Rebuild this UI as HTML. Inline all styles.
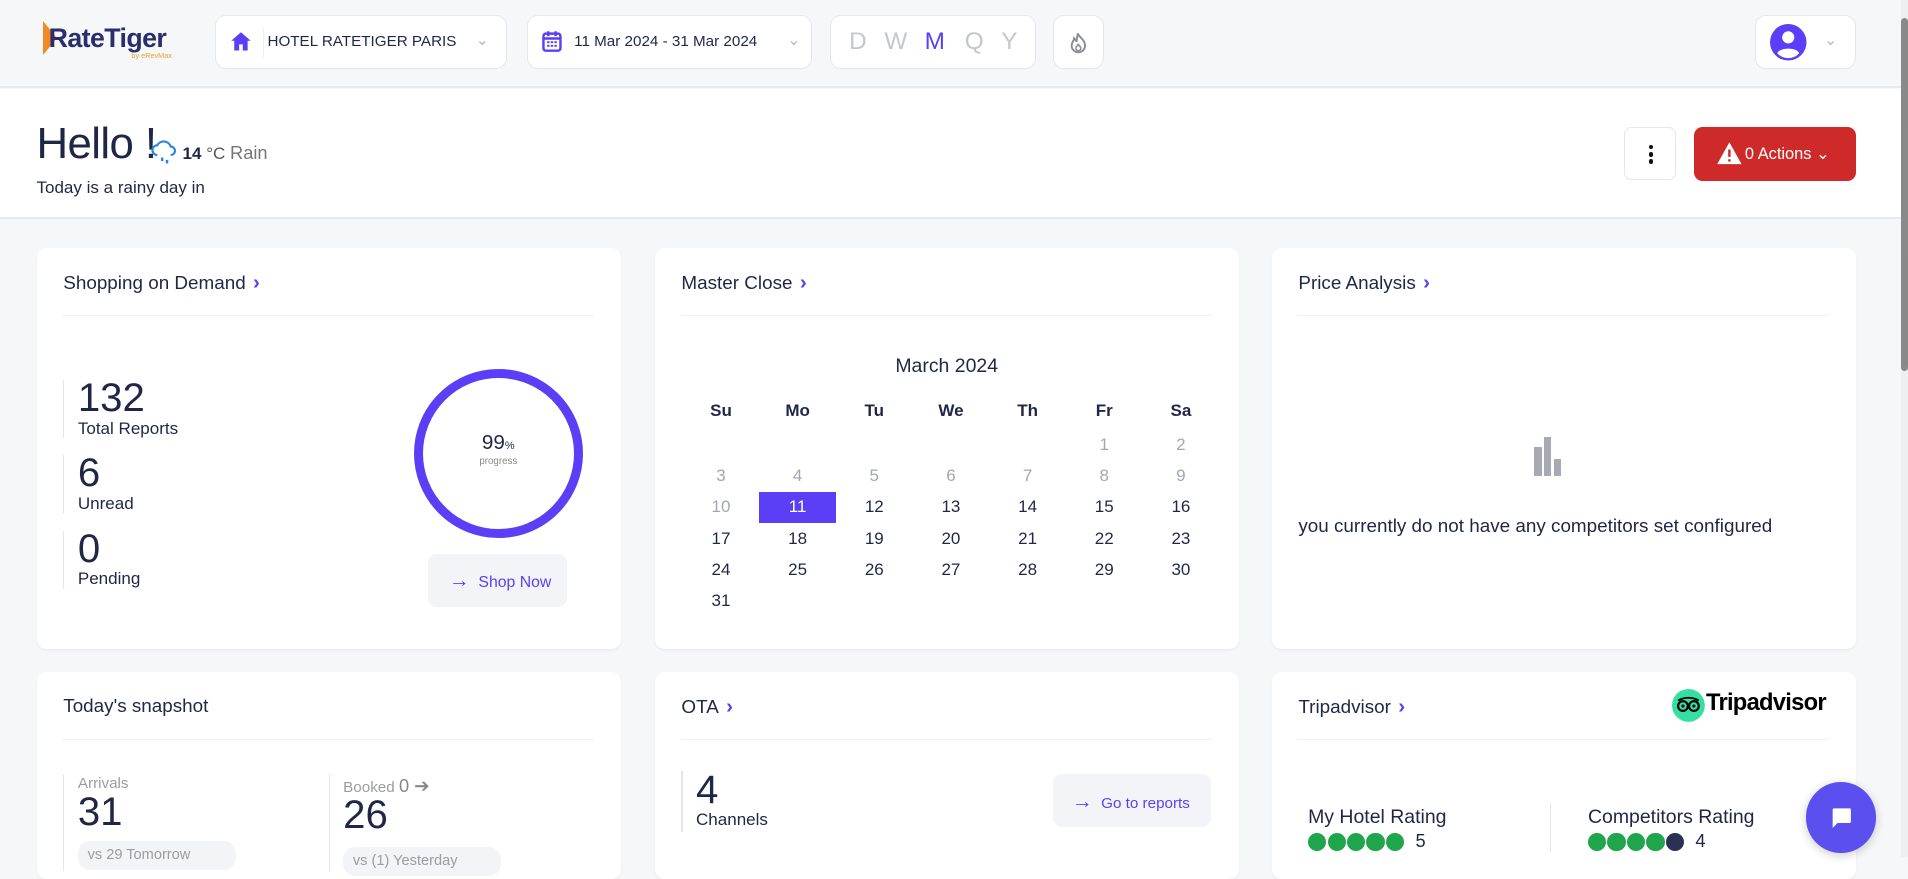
<!DOCTYPE html>
<html><head><meta charset="utf-8">
<style>
html{zoom:1.21684}
*{box-sizing:border-box;margin:0;padding:0}
body{width:1568px;height:704px;overflow:hidden;background:#f6f7f9;font-family:"Liberation Sans",sans-serif;color:#1f2747;position:relative}
.a{position:absolute}
.box{position:absolute;background:#fff;border:1px solid #e6e7ec;border-radius:9px}
.card{position:absolute;background:#fff;border-radius:8px;box-shadow:0 1px 2px rgba(0,0,0,.05)}
.ttl{position:absolute;left:22px;top:19px;font-size:15.5px;color:#1f2747}
.ttl b{color:#5b3ff6;font-weight:bold;margin-left:6px;font-size:17px}
.hr{position:absolute;left:22px;right:22px;top:55px;height:1px;background:#eef0f5}
.cal td{width:63px;height:25.6px;text-align:center;font-size:14px}
.g{color:#a3a7b3}
.dot{display:inline-block;width:15px;height:15px;border-radius:50%;background:#1fa64b;margin-right:1px;vertical-align:middle}
</style></head><body>
<!-- top bar -->
<div class="a" style="left:0;top:0;width:1568px;height:72px;border-bottom:2px solid #e8e9ee"></div>
<div class="a" style="left:35px;top:17px;width:0;height:0;border-left:12px solid #f08a24;border-top:14px solid transparent;border-bottom:14px solid transparent"></div>
<div class="a" style="left:40px;top:19px;font-size:22px;font-weight:bold;color:#2b2d6e;letter-spacing:-0.5px">RateTiger</div>
<div class="a" style="left:108px;top:42px;font-size:6px;color:#f0a030">by eRevMax</div>
<div class="box" style="left:177px;top:12px;width:240px;height:45px">
 <svg class="a" style="left:11px;top:13px" width="18" height="17" viewBox="0 0 18 17"><path d="M9 1L1 8h2.5v8h4v-5h3v5h4V8H17z" fill="#5b3ff6"/></svg>
 <div class="a" style="left:38px;top:10px;width:1px;height:24px;background:#eee"></div>
 <div class="a" style="left:42px;top:14px;font-size:12.5px">HOTEL RATETIGER PARIS</div>
 <div class="a" style="left:213px;top:12px;font-size:13px;color:#b8bac4">&#8964;</div>
</div>
<div class="box" style="left:433px;top:12px;width:234px;height:45px">
 <svg class="a" style="left:11px;top:12px" width="18" height="19" viewBox="0 0 18 19"><rect x="2" y="3" width="14" height="14" rx="2" fill="none" stroke="#5b3ff6" stroke-width="2"/><path d="M2 7h14M6 1v4M12 1v4" stroke="#5b3ff6" stroke-width="2"/><path d="M5 10h2M8 10h2M11 10h2M5 13h2M8 13h2M11 13h2" stroke="#5b3ff6" stroke-width="1.5"/></svg>
 <div class="a" style="left:38px;top:14px;font-size:12.5px">11 Mar 2024 - 31 Mar 2024</div>
 <div class="a" style="left:213px;top:12px;font-size:13px;color:#b8bac4">&#8964;</div>
</div>
<div class="box" style="left:682px;top:12px;width:169px;height:45px;font-size:20px;color:#c4c6cf">
 <span class="a" style="left:15px;top:10px">D</span><span class="a" style="left:44px;top:10px">W</span><span class="a" style="left:77px;top:10px;color:#5b3ff6">M</span><span class="a" style="left:110px;top:10px">Q</span><span class="a" style="left:140px;top:10px">Y</span>
</div>
<div class="box" style="left:865px;top:12px;width:42px;height:45px">
 <svg class="a" style="left:12px;top:13px" width="17" height="19" viewBox="0 0 17 19"><path d="M8 2c1 3 6 5 6 10a5.5 5.5 0 01-11 0c0-3 2-4 2-6 1 1 2 2 2 3 0-3 1-5 1-7z" fill="none" stroke="#8a8d99" stroke-width="1.6"/><path d="M8.5 11c1 1.5 2 2 2 3.2a2 2 0 01-4 0c0-1 1-2 2-3.2z" fill="none" stroke="#8a8d99" stroke-width="1.3"/></svg>
</div>
<div class="box" style="left:1442px;top:12px;width:83px;height:45px">
 <svg class="a" style="left:12px;top:7px" width="30" height="30" viewBox="0 0 30 30"><circle cx="15" cy="15" r="15" fill="#5b3ff6"/><circle cx="15" cy="11" r="5" fill="#fff"/><path d="M6 24c2-5 16-5 18 0a12 12 0 01-18 0z" fill="#fff"/></svg>
 <div class="a" style="left:56px;top:12px;font-size:13px;color:#b8bac4">&#8964;</div>
</div>
<div class="a" style="left:1562px;top:15px;width:6px;height:290px;background:#8e8e8e;border-radius:3px"></div>
<div class="a" style="left:1562px;top:0;width:6px;height:704px;background:rgba(0,0,0,0.03)"></div>

<!-- hello -->
<div class="a" style="left:0;top:73px;width:1562px;height:107px;background:#fff;border-bottom:2px solid #e8e9ee"></div>
<div class="a" style="left:30px;top:98px;font-size:36px;font-weight:300;color:#1f2747;letter-spacing:-0.5px">Hello !</div>
<svg class="a" style="left:123px;top:113px" width="24" height="26" viewBox="0 0 24 26"><path d="M6 14a4 4 0 010-8 6 6 0 0111 1 3.5 3.5 0 010 7" fill="none" stroke="#2f89d6" stroke-width="1.8"/><path d="M10 16v3M14 18v3" stroke="#2f89d6" stroke-width="2"/></svg>
<div class="a" style="left:150px;top:117px;font-size:14px"><b>14</b> <span style="color:#555">&#176;C</span> <span style="color:#767676;font-size:15px">Rain</span></div>
<div class="a" style="left:30px;top:146px;font-size:14px">Today is a rainy day in</div>
<div class="box" style="left:1335px;top:104px;width:42px;height:44px;border-radius:6px">
 <div class="a" style="left:19px;top:14px;width:4px;height:4px;border-radius:2px;background:#111"></div>
 <div class="a" style="left:19px;top:20px;width:4px;height:4px;border-radius:2px;background:#111"></div>
 <div class="a" style="left:19px;top:26px;width:4px;height:4px;border-radius:2px;background:#111"></div>
</div>
<div class="a" style="left:1392px;top:104px;width:133px;height:45px;background:#cf2a2a;border-radius:7px;color:#fff">
 <svg class="a" style="left:18px;top:12px" width="22" height="20" viewBox="0 0 22 20"><path d="M11 1L21 19H1z" fill="#fff"/><path d="M11 7v6M11 15v2" stroke="#cf2a2a" stroke-width="2"/></svg>
 <div class="a" style="left:42px;top:14px;font-size:13.5px">0 Actions &#8964;</div>
</div>

<!-- row 1 -->
<div class="card" style="left:30px;top:204px;width:480px;height:329px">
 <div class="ttl">Shopping on Demand<b>&#8250;</b></div><div class="hr"></div>
 <div class="a" style="left:22px;top:108px;width:1px;height:48px;background:#e3e5ea"></div>
 <div class="a" style="left:34px;top:104px;font-size:33px">132</div>
 <div class="a" style="left:34px;top:140px;font-size:14px">Total Reports</div>
 <div class="a" style="left:22px;top:170px;width:1px;height:48px;background:#e3e5ea"></div>
 <div class="a" style="left:34px;top:166px;font-size:33px">6</div>
 <div class="a" style="left:34px;top:202px;font-size:14px">Unread</div>
 <div class="a" style="left:22px;top:232px;width:1px;height:48px;background:#e3e5ea"></div>
 <div class="a" style="left:34px;top:228px;font-size:33px">0</div>
 <div class="a" style="left:34px;top:264px;font-size:14px">Pending</div>
 <div class="a" style="left:310px;top:99px;width:139px;height:139px;border-radius:50%;border:8px solid #5b3ff6"></div>
 <div class="a" style="left:310px;top:150px;width:139px;text-align:center;font-size:17px">99<span style="font-size:9px">%</span></div>
 <div class="a" style="left:310px;top:171px;width:139px;text-align:center;font-size:8px;color:#888">progress</div>
 <div class="a" style="left:322px;top:251px;width:114px;height:44px;background:#f3f4f7;border-radius:7px;color:#5b3ff6;font-size:13px;padding:13px 0 0 17px"><span style="font-size:17px">&#8594;</span>&nbsp; Shop Now</div>
</div>
<div class="card" style="left:538px;top:204px;width:480px;height:329px">
 <div class="ttl">Master Close<b>&#8250;</b></div><div class="hr"></div>
 <div class="a" style="left:0;top:88px;width:480px;text-align:center;font-size:16px">March 2024</div>
 <table class="cal a" style="left:23px;top:119px;border-collapse:collapse">
  <tr style="font-weight:bold"><td style="height:30px">Su</td><td>Mo</td><td>Tu</td><td>We</td><td>Th</td><td>Fr</td><td>Sa</td></tr>
  <tr class="g"><td></td><td></td><td></td><td></td><td></td><td>1</td><td>2</td></tr>
  <tr class="g"><td>3</td><td>4</td><td>5</td><td>6</td><td>7</td><td>8</td><td>9</td></tr>
  <tr><td class="g">10</td><td style="background:#5b3ff6;color:#fff">11</td><td>12</td><td>13</td><td>14</td><td>15</td><td>16</td></tr>
  <tr><td>17</td><td>18</td><td>19</td><td>20</td><td>21</td><td>22</td><td>23</td></tr>
  <tr><td>24</td><td>25</td><td>26</td><td>27</td><td>28</td><td>29</td><td>30</td></tr>
  <tr><td>31</td><td></td><td></td><td></td><td></td><td></td><td></td></tr>
 </table>
</div>
<div class="card" style="left:1045px;top:204px;width:480px;height:329px">
 <div class="ttl">Price Analysis<b>&#8250;</b></div><div class="hr"></div>
 <div class="a" style="left:216px;top:163px;width:6px;height:24px;background:#a7aab5"></div>
 <div class="a" style="left:224px;top:155px;width:6px;height:32px;background:#a7aab5"></div>
 <div class="a" style="left:232px;top:173px;width:6px;height:14px;background:#a7aab5"></div>
 <div class="a" style="left:22px;top:219px;font-size:15.5px">you currently do not have any competitors set configured</div>
</div>

<!-- row 2 -->
<div class="card" style="left:30px;top:552px;width:480px;height:170px">
 <div class="ttl">Today's snapshot</div><div class="hr"></div>
 <div class="a" style="left:22px;top:84px;width:1px;height:80px;background:#e3e5ea"></div>
 <div class="a" style="left:34px;top:85px;font-size:12.5px;color:#9a9ca6">Arrivals</div>
 <div class="a" style="left:34px;top:96px;font-size:33px">31</div>
 <div class="a" style="left:34px;top:139px;width:130px;height:24px;background:#f3f4f7;border-radius:10px;font-size:12px;color:#9a9ca6;padding:5px 8px">vs 29 Tomorrow</div>
 <div class="a" style="left:240px;top:84px;width:1px;height:80px;background:#e3e5ea"></div>
 <div class="a" style="left:252px;top:85px;font-size:12.5px;color:#9a9ca6">Booked <span style="font-size:15px;color:#888">0 &#10132;</span></div>
 <div class="a" style="left:252px;top:99px;font-size:33px">26</div>
 <div class="a" style="left:252px;top:144px;width:130px;height:24px;background:#f3f4f7;border-radius:10px;font-size:12px;color:#9a9ca6;padding:5px 8px">vs (1) Yesterday</div>
</div>
<div class="card" style="left:538px;top:552px;width:480px;height:170px">
 <div class="ttl">OTA<b>&#8250;</b></div><div class="hr"></div>
 <div class="a" style="left:22px;top:82px;width:1px;height:50px;background:#e3e5ea"></div>
 <div class="a" style="left:34px;top:78px;font-size:33px">4</div>
 <div class="a" style="left:34px;top:114px;font-size:14px">Channels</div>
 <div class="a" style="left:327px;top:84px;width:130px;height:44px;background:#f3f4f7;border-radius:7px;color:#5b3ff6;font-size:12.5px;padding:13px 0 0 16px"><span style="font-size:17px">&#8594;</span>&nbsp; Go to reports</div>
</div>
<div class="card" style="left:1045px;top:552px;width:480px;height:170px">
 <div class="ttl">Tripadvisor<b>&#8250;</b></div><div class="hr"></div>
 <svg class="a" style="left:329px;top:14px" width="27" height="27" viewBox="0 0 27 27"><circle cx="13.5" cy="13.5" r="13.5" fill="#34e0a1"/><circle cx="9" cy="14" r="4" fill="none" stroke="#000" stroke-width="1.8"/><circle cx="18" cy="14" r="4" fill="none" stroke="#000" stroke-width="1.8"/><circle cx="9" cy="14" r="1.3"/><circle cx="18" cy="14" r="1.3"/><path d="M5 9.5c5-3 12-3 17 0" fill="none" stroke="#000" stroke-width="1.6"/></svg>
 <div class="a" style="left:357px;top:15px;font-size:19.5px;font-weight:bold;color:#000;letter-spacing:-0.6px">Tripadvisor</div>
 <div class="a" style="left:30px;top:110px;font-size:16px">My Hotel Rating</div>
 <div class="a" style="left:30px;top:130px;font-size:15px"><span class="dot"></span><span class="dot"></span><span class="dot"></span><span class="dot"></span><span class="dot"></span>&nbsp; 5</div>
 <div class="a" style="left:229px;top:108px;width:1px;height:40px;background:#e3e5ea"></div>
 <div class="a" style="left:260px;top:110px;font-size:16px">Competitors Rating</div>
 <div class="a" style="left:260px;top:130px;font-size:15px"><span class="dot"></span><span class="dot"></span><span class="dot"></span><span class="dot"></span><span class="dot" style="background:#2a3154"></span>&nbsp; 4</div>
</div>
<div class="a" style="left:1484px;top:643px;width:58px;height:58px;border-radius:50%;background:#5b4ff0;box-shadow:0 2px 8px rgba(0,0,0,.2)">
 <svg class="a" style="left:19px;top:19px" width="20" height="20" viewBox="0 0 20 20"><path d="M3 2h14a1 1 0 011 1v10a1 1 0 01-1 1H7l-4 4V3a1 1 0 011-1z" fill="#fff"/></svg>
</div>
</body></html>
